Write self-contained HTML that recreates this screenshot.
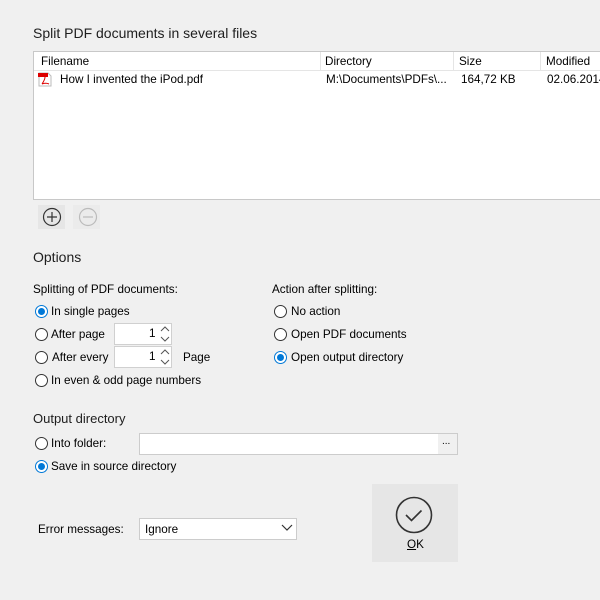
<!DOCTYPE html>
<html><head><style>
body{margin:0;width:600px;height:600px;background:#f0f0f0;font-family:"Liberation Sans",sans-serif;font-size:11.7px;color:#000;position:relative;overflow:hidden}
.a{position:absolute;white-space:nowrap}
.h{font-size:14px;color:#1e1e1e}
.r{position:absolute;width:13px;height:13px;border:1px solid #333;border-radius:50%;background:#fff;box-sizing:border-box}
.r.on{border-color:#0078d7}
.r.on::after{content:"";position:absolute;left:2px;top:2px;width:7px;height:7px;border-radius:50%;background:#0078d7}
.sp{position:absolute;width:58px;height:22px;background:#fff;border:1px solid #d0d0d0;box-sizing:border-box}
</style></head><body>
<div class="a h" style="left:33px;top:25px">Split PDF documents in several files</div>
<div class="a" style="left:33px;top:51px;width:580px;height:149px;background:#fff;border:1px solid #c8c8c8;box-sizing:border-box"></div>
<div class="a" style="left:34px;top:52px;width:570px;height:18px;border-bottom:1px solid #e5e5e5"></div>
<div class="a" style="left:320px;top:52px;width:1px;height:18px;background:#e5e5e5"></div>
<div class="a" style="left:453px;top:52px;width:1px;height:18px;background:#e5e5e5"></div>
<div class="a" style="left:540px;top:52px;width:1px;height:18px;background:#e5e5e5"></div>
<div class="a" style="left:41px;top:55px">Filename</div>
<div class="a" style="left:325px;top:55px">Directory</div>
<div class="a" style="left:459px;top:55px">Size</div>
<div class="a" style="left:546px;top:55px">Modified</div>
<svg class="a" style="left:38px;top:72px" width="14" height="15"><path d="M1 1h9l3 3v10H1z" fill="#fff" stroke="#bbb"/><rect x="0" y="1" width="10" height="4" fill="#d00"/><path d="M4 12c2-3 3-5 3-7M4 12c3-1 5-1 7 0" stroke="#d00" fill="none"/></svg>
<div class="a" style="left:60px;top:73px">How I invented the iPod.pdf</div>
<div class="a" style="left:326px;top:73px">M:\Documents\PDFs\...</div>
<div class="a" style="left:461px;top:73px">164,72 KB</div>
<div class="a" style="left:547px;top:73px">02.06.2014</div>
<div class="a" style="left:38px;top:205px;width:27px;height:24px;background:#e6e6e6"></div>
<svg class="a" style="left:42px;top:207px" width="20" height="20"><circle cx="10" cy="10" r="8.5" fill="none" stroke="#333" stroke-width="1.2"/><path d="M5 10h10M10 5v10" stroke="#333" stroke-width="1.2"/></svg>
<div class="a" style="left:73px;top:205px;width:27px;height:24px;background:#ebebeb"></div>
<svg class="a" style="left:78px;top:207px" width="20" height="20"><circle cx="10" cy="10" r="8.5" fill="none" stroke="#bbb" stroke-width="1.2"/><path d="M5 10h10" stroke="#bbb" stroke-width="1.2"/></svg>
<div class="a h" style="left:33px;top:249px">Options</div>
<div class="a" style="left:33px;top:283px">Splitting of PDF documents:</div>
<div class="r on" style="left:35px;top:305px"></div><div class="a" style="left:51px;top:305px">In single pages</div>
<div class="r" style="left:35px;top:328px"></div><div class="a" style="left:51px;top:328px">After page</div>
<div class="sp" style="left:114px;top:323px"></div><div class="a" style="left:149px;top:327px">1</div>
<svg class="a" style="left:158px;top:325px" width="14" height="18"><path d="M3 6l4-4 4 4M3 12l4 4 4-4" fill="none" stroke="#555"/></svg>
<div class="r" style="left:35px;top:351px"></div><div class="a" style="left:52px;top:351px">After every</div>
<div class="sp" style="left:114px;top:346px"></div><div class="a" style="left:149px;top:350px">1</div>
<svg class="a" style="left:158px;top:348px" width="14" height="18"><path d="M3 6l4-4 4 4M3 12l4 4 4-4" fill="none" stroke="#555"/></svg>
<div class="a" style="left:183px;top:351px">Page</div>
<div class="r" style="left:35px;top:374px"></div><div class="a" style="left:51px;top:374px">In even &amp; odd page numbers</div>
<div class="a" style="left:272px;top:283px">Action after splitting:</div>
<div class="r" style="left:274px;top:305px"></div><div class="a" style="left:291px;top:305px">No action</div>
<div class="r" style="left:274px;top:328px"></div><div class="a" style="left:291px;top:328px">Open PDF documents</div>
<div class="r on" style="left:274px;top:351px"></div><div class="a" style="left:291px;top:351px">Open output directory</div>
<div class="a h" style="left:33px;top:411px;font-size:13px">Output directory</div>
<div class="r" style="left:35px;top:437px"></div><div class="a" style="left:51px;top:437px">Into folder:</div>
<div class="a" style="left:139px;top:433px;width:319px;height:22px;background:#fff;border:1px solid #ccc;box-sizing:border-box"></div>
<div class="a" style="left:438px;top:434px;width:19px;height:20px;background:#f0f0f0"></div>
<div class="a" style="left:442px;top:436px;font-size:10px">...</div>
<div class="r on" style="left:35px;top:460px"></div><div class="a" style="left:51px;top:460px">Save in source directory</div>
<div class="a" style="left:38px;top:523px">Error messages:</div>
<div class="a" style="left:139px;top:518px;width:158px;height:22px;background:#fff;border:1px solid #ccc;box-sizing:border-box"></div>
<div class="a" style="left:145px;top:523px">Ignore</div>
<svg class="a" style="left:281px;top:524px" width="12" height="8"><path d="M1 1l5 5 5-5" fill="none" stroke="#333" stroke-width="1.2"/></svg>
<div class="a" style="left:372px;top:484px;width:86px;height:78px;background:#e6e6e6"></div>
<svg class="a" style="left:395px;top:496px" width="40" height="40"><circle cx="19" cy="19" r="17.5" fill="none" stroke="#333" stroke-width="1.6"/><path d="M11 19l5.5 5.5 10-10" fill="none" stroke="#333" stroke-width="1.6"/></svg>
<div class="a" style="left:407px;top:538px"><u>O</u>K</div>
</body></html>
